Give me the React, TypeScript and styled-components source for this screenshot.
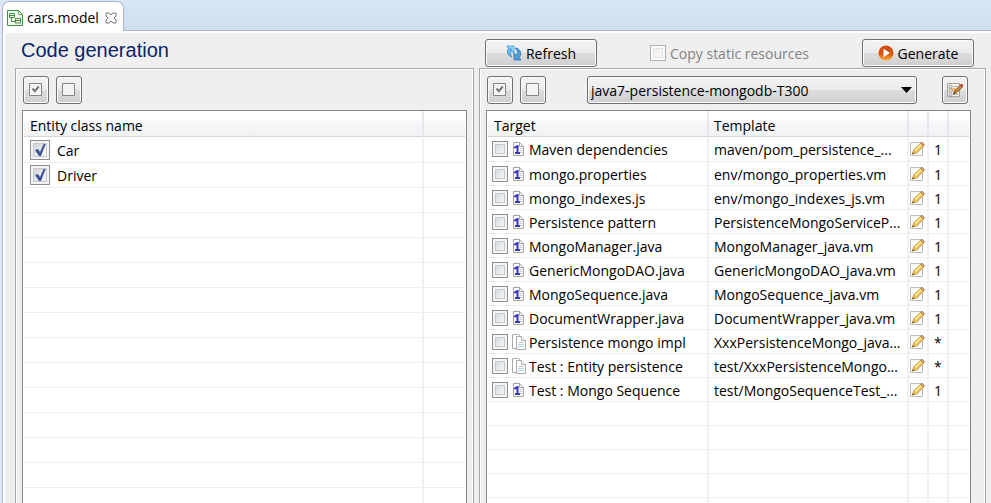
import React from "react";
import styled, { createGlobalStyle, css } from "styled-components";

const Global = createGlobalStyle`
  *, *::before, *::after { box-sizing: border-box; }
  body {
    margin: 0;
    background: #dfe6f5;
    font-family: "Open Sans", "Noto Sans", sans-serif;
    font-size: 14px;
    line-height: 20px;
    color: #000;
  }
  button, select, input { font: inherit; color: inherit; margin: 0; }
`;

const Window = styled.div`
  display: flex;
  flex-direction: column;
  height: 100vh;
  overflow: hidden;
  padding-left: 2px;
`;

const TabBar = styled.header`
  display: flex;
  flex: none;
  height: 31px;
  padding-top: 1px;
  border-bottom: 1px solid #a9b3d1;
  border-top-left-radius: 7px;
  background: linear-gradient(#d9e7f5, #cddeee);
`;

const Tab = styled.div`
  display: flex;
  align-items: center;
  gap: 4px;
  height: 31px;
  padding: 2px 6px 0 4px;
  border: 1px solid #a9b3d1;
  border-bottom: 0;
  border-radius: 7px 7px 0 0;
  background: #fff;
`;

const CloseButton = styled.button`
  display: flex;
  padding: 0;
  margin-left: 2px;
  border: 0;
  background: none;
`;

const Editor = styled.main`
  display: flex;
  flex: 1;
  flex-direction: column;
  min-height: 0;
  border-left: 1px solid #b3bbd3;
  box-shadow: inset 2px 2px #fff;
  padding: 8px 5px 0 12px;
  background: #efefef;
`;

const twoColumns = css`
  display: grid;
  grid-template-columns: minmax(0, 459fr) minmax(0, 507fr);
  column-gap: 5px;
`;

const TitleRow = styled.div`
  ${twoColumns}
  flex: none;
  height: 29px;
`;

const Title = styled.h1`
  margin: 0;
  padding: 0 6px;
  font: 400 20px/22px "Liberation Sans", Arial, sans-serif;
  color: #0a246a;
`;

const Actions = styled.div`
  display: flex;
  align-items: center;
  justify-content: space-between;
  height: 28px;
  padding: 0 12px 0 6px;
`;

const raised = css`
  border: 1px solid #707070;
  border-radius: 3px;
  background: linear-gradient(#f3f3f3, #ebebeb 50%, #dddddd 50%, #cfcfcf);
  box-shadow: inset 0 0 0 1px #fafafa;
`;

const ActionButton = styled.button`
  ${raised}
  display: flex;
  align-items: center;
  justify-content: center;
  gap: 4px;
  width: 112px;
  height: 28px;
  padding: 0;
`;

const IconButton = styled.button`
  ${raised}
  display: flex;
  flex: none;
  align-items: center;
  justify-content: center;
  width: 26px;
  height: 28px;
  padding: 0;
`;

const StaticOption = styled.label`
  display: flex;
  align-items: center;
  gap: 4px;
  color: #838383;
`;

const checkMark = `url("data:image/svg+xml,%3Csvg xmlns='http://www.w3.org/2000/svg' viewBox='0 0 20 20'%3E%3Cpath d='M5 10l3-1 2 3 4-9h2l-5 13H9z' fill='%233f5596'/%3E%3C/svg%3E")`;

const Check = styled.input<{ $size: number }>`
  appearance: none;
  flex: none;
  width: ${(p) => p.$size}px;
  height: ${(p) => p.$size}px;
  border: 1px solid #8e8f8f;
  background: linear-gradient(135deg, #c9ced6, #eceef0 60%, #f6f6f6);
  box-shadow: inset 0 0 0 2px #f4f4f4, inset 0 0 0 3px #c6cad1;
  &:checked {
    background: ${checkMark} center / 20px no-repeat,
      linear-gradient(135deg, #c4cad3, #eceef0 60%, #f6f6f6);
  }
  &:disabled {
    border-color: #b1b1b1;
    background: linear-gradient(135deg, #ececec, #fafafa);
    box-shadow: inset 0 0 0 2px #fbfbfb, inset 0 0 0 3px #e4e4e4;
  }
`;

const Caption = styled.span`
  padding-top: 2px;
`;

const Panels = styled.div`
  ${twoColumns}
  flex: 1;
  min-height: 0;
`;

const Panel = styled.section<{ $end: number }>`
  display: flex;
  flex-direction: column;
  min-height: 0;
  border: 1px solid #a8a8ac;
  border-bottom: 0;
  box-shadow: inset 1px 1px #fff, inset -1px 0 #fff;
  padding: 7px ${(p) => p.$end}px 0 6px;
`;

const Toolbar = styled.div`
  display: flex;
  flex: none;
  gap: 7px;
  height: 34px;
  padding: 0 3px 0 1px;
`;

const SelectBox = styled.div`
  position: relative;
  flex: 1;
  height: 28px;
  margin: 0 18px 0 34px;
  svg { position: absolute; right: 5px; top: 11px; pointer-events: none; }
`;

const Select = styled.select`
  ${raised}
  appearance: none;
  width: 100%;
  height: 28px;
  padding: 2px 20px 0 3px;
`;

const TableBox = styled.div`
  flex: 1;
  min-height: 0;
  overflow: hidden;
  border: 1px solid #828790;
  border-bottom: 0;
  padding: 0 1px;
  background: #fff;
`;

const Table = styled.table<{ $row: number; $inset: number }>`
  width: 100%;
  table-layout: fixed;
  border-collapse: separate;
  border-spacing: 0;
  th, td {
    padding: 0 0 0 5px;
    border-bottom: 1px solid #ededf0;
    border-right: 2px solid #eff1f7;
    white-space: nowrap;
    text-align: left;
    font-weight: 400;
  }
  th {
    height: 26px;
    padding-top: 4px;
    border-bottom-color: #d5d5d5;
    border-right-color: #e6e8ed;
    background: linear-gradient(#fff 0 9px, #f7f8fa 10px, #f0f2f4);
  }
  td { height: ${(p) => p.$row}px; }
  tbody tr:first-child td { height: ${(p) => p.$row + 1}px; }
  td:first-child { padding-left: ${(p) => p.$inset}px; }
  th:first-child { padding-left: 6px; }
  th:last-child, td:last-child { border-right: 0; }
`;

const TextCell = styled.td`
  && { padding-top: 2px; }
`;

const ItemLabel = styled.label<{ $gap: number }>`
  display: flex;
  align-items: center;
  gap: ${(p) => p.$gap}px;
`;

const EditButton = styled.button`
  display: flex;
  margin: 0 0 0 -5px;
  padding: 0;
  border: 0;
  background: none;
`;

const ModelIcon = () => (
  <svg width="16" height="16" viewBox="0 0 16 16" fill="none" stroke="#3c9142">
    <path d="M.5.5h11l4 4v11H.5z" fill="#f3faef" />
    <path d="M11.500 .5v4h4" stroke="#78b46e" />
    <path d="M2.500 3.500h5v4h-5zM2.500 5.500h5M8.500 8.500h5v4.500h-5zM8.500 10.500h5M4.500 8v3.500h4" />
  </svg>
);

const CloseIcon = () => (
  <svg width="12" height="12" viewBox="0 0 12 12" fill="#fff" stroke="#777">
    <path d="M1 1h3l2 2 2-2h3v3L9 6l2 2v3H8L6 9l-2 2H1V8l2-2-2-2z" />
  </svg>
);

const RefreshIcon = () => (
  <svg width="16" height="16" viewBox="0 0 16 16">
    <path d="M1 1h7v7L5.500 6C4 8 4.500 10 6 12c-4-1-6-5-3.500-8.500z" fill="#67b7ea" stroke="#2f83c3" strokeWidth=".7" />
    <path d="M15 15H8V8l2.500 2C12 8 11.500 5 9 3c5 0 7.500 5.500 4.300 9.500z" fill="#4ba0df" stroke="#256fae" strokeWidth=".7" />
    <path d="M2.500 2h4.500v4" fill="none" stroke="#b9e4fb" />
  </svg>
);

const GenerateIcon = () => (
  <svg width="16" height="16" viewBox="0 0 16 16">
    <defs>
      <linearGradient id="orange" x2="0" y2="1">
        <stop stopColor="#cc4a12" />
        <stop offset=".55" stopColor="#d9530b" />
        <stop offset="1" stopColor="#ffb13b" />
      </linearGradient>
    </defs>
    <circle cx="8" cy="8" r="7.500" fill="url(#orange)" />
    <path d="M5.500 3.800v8.400L12 8z" fill="#fff" />
  </svg>
);

const ToggleIcon = ({ checked }: { checked?: boolean }) => (
  <svg width="14" height="14" viewBox="0 0 14 14">
    <path d="M.5.500h12v12H.5z" fill="#f4f4f4" stroke="#858585" />
    {checked && <path d="M3.500 5.500l2.300 2.700L9.800 3.500" fill="none" stroke="#777" strokeWidth="2" />}
  </svg>
);

const FormEditIcon = () => (
  <svg width="18" height="18" viewBox="0 0 18 18">
    <path d="M1.500 2.500h12v13h-12z" fill="#f7f3ea" stroke="#aaa59b" />
    <path d="M3 7h7v4H3z" fill="#f3bd80" />
    <path d="M7.500 5.500h4M7.500 13.500h5" stroke="#a9a9a9" />
    <path d="M3 4h3v3H3zM3 8h3v3H3zM3 12h3v3H3z" fill="#dde3e8" stroke="#86909a" strokeWidth=".6" />
    <path d="M7.500 13l1.500-3.500L14.500 4l2 2-5.500 5.500z" fill="#cf8739" stroke="#704516" strokeWidth=".8" />
    <path d="M14 4l1.500-1.500 2 2L16 6z" fill="#b93e33" />
    <path d="M7.500 13l.5-2 1.500 1.200z" fill="#333" />
  </svg>
);

const SingleIcon = () => (
  <svg width="15" height="16" viewBox="0 0 15 16">
    <path d="M2.500 1.500h6l4 4v9h-10z" fill="#fff" stroke="#a3a3a3" />
    <path d="M8.500 1.500v4h4" fill="none" stroke="#a3a3a3" />
    <path d="M8.500 7.500h3M8.500 9.500h3M8.500 11.500h3" stroke="#bdc7d8" />
    <path d="M3 7.500V6l3-2h1.500v7H9v2H4v-2h1.500V7z" fill="#3636bd" />
  </svg>
);

const MultiIcon = () => (
  <svg width="15" height="16" viewBox="-1 0 15 16" fill="#fff" stroke="#a9aaac">
    <path d="M.5.500h6l3 3v11H.5z" />
    <path d="M4.500 2.500h5l4 4v9h-9z" />
    <path d="M9.500 2.500v4h4" />
    <path d="M6 8.500h6M6 10.500h6M6 12.500h6" stroke="#b9d0e4" />
  </svg>
);

const PencilIcon = () => (
  <svg width="16" height="16" viewBox="0 0 16 16">
    <path d="M1.500 1.500h12v13h-12z" fill="#fafafa" stroke="#bdbdbd" />
    <path d="M3.500 13l1.300-4.300L12 2l3 2.700-7 7z" fill="#f5c95e" stroke="#b87a2b" strokeWidth=".8" />
    <path d="M6 9.500l6-6" stroke="#fff0a8" strokeWidth="1.200" />
    <path d="M11.500 2.500L13 1l2.500 2.500-1.200 1.500z" fill="#dba079" stroke="#a76a44" strokeWidth=".6" />
    <path d="M3.300 13.200l.5-2 1.500 1.300z" fill="#5a4020" />
  </svg>
);

const entities = ["Car", "Driver"];

const targets: [string, string, string][] = [
  ["Maven dependencies", "maven/pom_persistence_...", "1"],
  ["mongo.properties", "env/mongo_properties.vm", "1"],
  ["mongo_indexes.js", "env/mongo_indexes_js.vm", "1"],
  ["Persistence pattern", "PersistenceMongoServiceP...", "1"],
  ["MongoManager.java", "MongoManager_java.vm", "1"],
  ["GenericMongoDAO.java", "GenericMongoDAO_java.vm", "1"],
  ["MongoSequence.java", "MongoSequence_java.vm", "1"],
  ["DocumentWrapper.java", "DocumentWrapper_java.vm", "1"],
  ["Persistence mongo impl", "XxxPersistenceMongo_java...", "*"],
  ["Test : Entity persistence", "test/XxxPersistenceMongo...", "*"],
  ["Test : Mongo Sequence", "test/MongoSequenceTest_...", "1"],
];

const blankRows = (rows: number, columns: number) =>
  Array.from({ length: rows }, (_, r) => (
    <tr key={`blank-${r}`}>
      {Array.from({ length: columns }, (_, c) => <td key={c} />)}
    </tr>
  ));

const SelectionButtons = () => (
  <>
    <IconButton aria-label="Select all"><ToggleIcon checked /></IconButton>
    <IconButton aria-label="Deselect all"><ToggleIcon /></IconButton>
  </>
);

export default function App() {
  return (
    <>
      <Global />
      <Window>
        <TabBar>
          <Tab>
            <ModelIcon />
            cars.model
            <CloseButton aria-label="Close cars.model"><CloseIcon /></CloseButton>
          </Tab>
        </TabBar>
        <Editor>
          <TitleRow>
            <Title>Code generation</Title>
            <Actions>
              <ActionButton><RefreshIcon /><Caption>Refresh</Caption></ActionButton>
              <StaticOption>
                <Check type="checkbox" $size={16} disabled />
                <Caption>Copy static resources</Caption>
              </StaticOption>
              <ActionButton><GenerateIcon /><Caption>Generate</Caption></ActionButton>
            </Actions>
          </TitleRow>
          <Panels>
            <Panel $end={6}>
              <Toolbar><SelectionButtons /></Toolbar>
              <TableBox>
                <Table $row={25} $inset={6}>
                  <colgroup><col /><col width="41" /></colgroup>
                  <thead><tr><th>Entity class name</th><th /></tr></thead>
                  <tbody>
                    {entities.map((name) => (
                      <tr key={name}>
                        <td>
                          <ItemLabel $gap={7}>
                            <Check type="checkbox" $size={20} defaultChecked />
                            <Caption>{name}</Caption>
                          </ItemLabel>
                        </td>
                        <td />
                      </tr>
                    ))}
                    {blankRows(14, 2)}
                  </tbody>
                </Table>
              </TableBox>
            </Panel>
            <Panel $end={14}>
              <Toolbar>
                <SelectionButtons />
                <SelectBox>
                  <Select aria-label="Template bundle">
                    <option>java7-persistence-mongodb-T300</option>
                  </Select>
                  <svg width="11" height="6" viewBox="0 0 11 6"><path d="M0 0h11L5.500 6z" /></svg>
                </SelectBox>
                <IconButton aria-label="Edit bundle"><FormEditIcon /></IconButton>
              </Toolbar>
              <TableBox>
                <Table $row={24} $inset={4}>
                  <colgroup>
                    <col /><col width="200" /><col width="20" /><col width="20" /><col width="20" />
                  </colgroup>
                  <thead>
                    <tr><th>Target</th><th>Template</th><th /><th /><th /></tr>
                  </thead>
                  <tbody>
                    {targets.map(([target, template, count]) => (
                      <tr key={target}>
                        <td>
                          <ItemLabel $gap={3}>
                            <Check type="checkbox" $size={16} />
                            {count === "1" ? <SingleIcon /> : <MultiIcon />}
                            <Caption>{target}</Caption>
                          </ItemLabel>
                        </td>
                        <TextCell>{template}</TextCell>
                        <td>
                          <EditButton aria-label={`Edit ${target}`}><PencilIcon /></EditButton>
                        </td>
                        <TextCell>{count}</TextCell>
                        <td />
                      </tr>
                    ))}
                    {blankRows(6, 5)}
                  </tbody>
                </Table>
              </TableBox>
            </Panel>
          </Panels>
        </Editor>
      </Window>
    </>
  );
}
